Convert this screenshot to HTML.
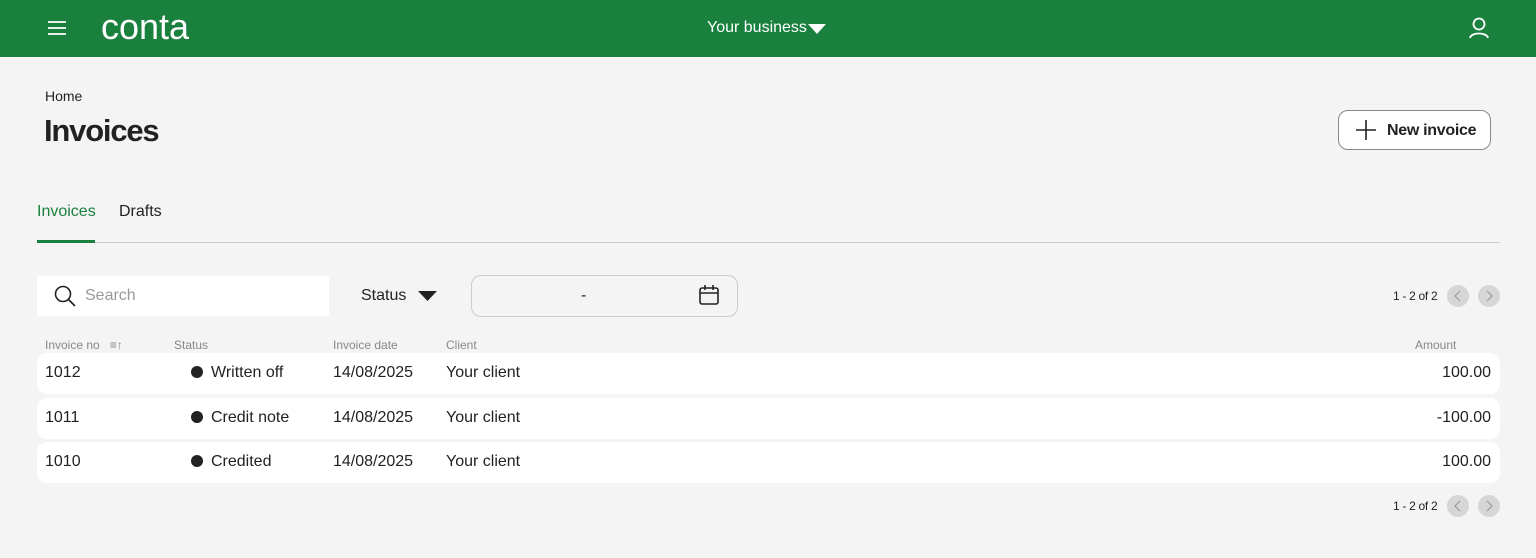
<!DOCTYPE html>
<html><head><style>
*{box-sizing:border-box;margin:0;padding:0}
body{width:1536px;height:558px;background:#f4f4f4;font-family:"Liberation Sans",sans-serif;color:#222;position:relative;overflow:hidden}
.abs{position:absolute}
.top{left:0;top:0;width:1536px;height:57px;background:#1a803e}
.row{position:absolute;left:37px;width:1463px;height:41px;background:#fff;border-radius:10px;font-size:16px}
.row span{position:absolute;top:11px}
.dot{display:inline-block;width:12px;height:12px;border-radius:50%;background:#222;margin-right:8px;vertical-align:-1px}
.hdr{position:absolute;top:338px;font-size:12px;color:#888}
.pg{font-size:12px}
.circ{position:absolute;width:22px;height:22px;border-radius:50%;background:#d6d6d6}
</style></head><body>
<div class="abs top">
  <svg class="abs" style="left:47px;top:20px" width="20" height="16"><path d="M1 2H19M1 8H19M1 14H19" stroke="#fff" stroke-width="1.8"/></svg>
  <div class="abs" style="left:101px;top:6px;color:#fff;font-size:36px;letter-spacing:0px">conta</div>
  <div class="abs" style="left:707px;top:19px;color:#fff;font-size:16px">Your business</div>
  <svg class="abs" style="left:808px;top:24px" width="18" height="10"><path d="M0 0H18L9 10Z" fill="#fff"/></svg>
  <svg class="abs" style="left:1468px;top:17px" width="22" height="22"><circle cx="11" cy="7" r="5.5" fill="none" stroke="#fff" stroke-width="1.8"/><path d="M2 21C3 15 19 15 20 21" fill="none" stroke="#fff" stroke-width="1.8"/></svg>
</div>
<div class="abs" style="left:45px;top:88px;font-size:14px">Home</div>
<div class="abs" style="left:44px;top:113px;font-size:31px;font-weight:bold;letter-spacing:-1.2px">Invoices</div>
<div class="abs" style="left:1338px;top:110px;width:153px;height:40px;border:1px solid #888;border-radius:10px;background:#fff;font-size:16px;font-weight:bold;padding:11px 0 0 48px;letter-spacing:-0.3px">New invoice</div>
<svg class="abs" style="left:1356px;top:120px" width="20" height="20"><path d="M10 0V20M0 10H20" stroke="#222" stroke-width="1.6"/></svg>
<div class="abs" style="left:37px;top:203px;font-size:16px;color:#1a803e">Invoices</div>
<div class="abs" style="left:119px;top:203px;font-size:16px">Drafts</div>
<div class="abs" style="left:37px;top:242px;width:1463px;height:1px;background:#ccc"></div>
<div class="abs" style="left:37px;top:240px;width:58px;height:3px;background:#1a803e"></div>
<div class="abs" style="left:37px;top:276px;width:292px;height:40px;background:#fff"></div>
<svg class="abs" style="left:54px;top:285px" width="22" height="22"><circle cx="9" cy="9" r="7.5" fill="none" stroke="#222" stroke-width="1.6"/><path d="M14.5 14.5L21 21" stroke="#222" stroke-width="1.6"/></svg>
<div class="abs" style="left:85px;top:287px;font-size:16px;color:#999">Search</div>
<div class="abs" style="left:361px;top:287px;font-size:16px">Status</div>
<svg class="abs" style="left:418px;top:291px" width="19" height="10"><path d="M0 0H19L9.5 10Z" fill="#222"/></svg>
<div class="abs" style="left:471px;top:275px;width:267px;height:42px;border:1px solid #ccc;border-radius:10px"></div>
<div class="abs" style="left:581px;top:287px;font-size:16px">-</div>
<svg class="abs" style="left:699px;top:285px" width="20" height="20"><rect x="1" y="3" width="18" height="16" rx="2" fill="none" stroke="#222" stroke-width="1.6"/><path d="M1 8H19M6 0V5M14 0V5" stroke="#222" stroke-width="1.6"/></svg>
<div class="abs pg" style="left:1393px;top:289px;letter-spacing:-0.3px">1 - 2 of 2</div>
<div class="circ" style="left:1447px;top:285px"><svg width="22" height="22"><path d="M13 6L8 11L13 16" fill="none" stroke="#999" stroke-width="1.2"/></svg></div>
<div class="circ" style="left:1478px;top:285px"><svg width="22" height="22"><path d="M9 6L14 11L9 16" fill="none" stroke="#999" stroke-width="1.2"/></svg></div>
<div class="abs pg" style="left:1393px;top:499px;letter-spacing:-0.3px">1 - 2 of 2</div>
<div class="circ" style="left:1447px;top:495px"><svg width="22" height="22"><path d="M13 6L8 11L13 16" fill="none" stroke="#999" stroke-width="1.2"/></svg></div>
<div class="circ" style="left:1478px;top:495px"><svg width="22" height="22"><path d="M9 6L14 11L9 16" fill="none" stroke="#999" stroke-width="1.2"/></svg></div>
<div class="hdr" style="left:45px">Invoice no &nbsp;&nbsp;≡↑</div>
<div class="hdr" style="left:174px">Status</div>
<div class="hdr" style="left:333px">Invoice date</div>
<div class="hdr" style="left:446px">Client</div>
<div class="hdr" style="left:1415px">Amount</div>
<div class="row" style="top:353px"><span style="left:8px">1012</span><span style="left:154px"><i class="dot"></i>Written off</span><span style="left:296px">14/08/2025</span><span style="left:409px">Your client</span><span style="right:9px">100.00</span></div>
<div class="row" style="top:398px"><span style="left:8px">1011</span><span style="left:154px"><i class="dot"></i>Credit note</span><span style="left:296px">14/08/2025</span><span style="left:409px">Your client</span><span style="right:9px">-100.00</span></div>
<div class="row" style="top:442px"><span style="left:8px">1010</span><span style="left:154px"><i class="dot"></i>Credited</span><span style="left:296px">14/08/2025</span><span style="left:409px">Your client</span><span style="right:9px">100.00</span></div>
</body></html>
